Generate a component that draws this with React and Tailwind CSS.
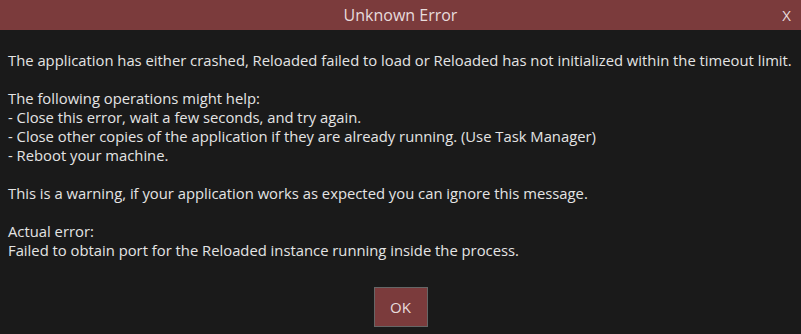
export default function App() {
  return (
    <div
      className="w-[801px] h-[334px] bg-[#1a1a1a] text-[#e4e4e4] flex flex-col overflow-hidden"
      style={{ fontFamily: '"Open Sans", "Noto Sans", sans-serif' }}
    >
      {/* title bar */}
      <div className="h-[30px] bg-[#7b3b3c] flex items-center relative shrink-0">
        <div className="flex-1 text-center text-[16px] text-[#e8dcdc]">Unknown Error</div>
        <div className="absolute right-[10px] top-0 h-[30px] flex items-center text-[15px] text-[#e8dcdc]">X</div>
      </div>

      {/* message */}
      <div className="px-2 pt-[21px] text-[14.8px] leading-[19px]">
        <p>The application has either crashed, Reloaded failed to load or Reloaded has not initialized within the timeout limit.</p>
        <p className="mt-[19px]">The following operations might help:</p>
        <p>- Close this error, wait a few seconds, and try again.</p>
        <p>- Close other copies of the application if they are already running. (Use Task Manager)</p>
        <p>- Reboot your machine.</p>
        <p className="mt-[19px]">This is a warning, if your application works as expected you can ignore this message.</p>
        <p className="mt-[19px]">Actual error:</p>
        <p>Failed to obtain port for the Reloaded instance running inside the process.</p>
      </div>

      <div className="flex justify-center mt-[27px]">
        <button className="w-[54px] h-[40px] bg-[#7b3b3c] border border-[#666] text-[15px] text-[#e8dcdc]">
          OK
        </button>
      </div>
    </div>
  );
}
